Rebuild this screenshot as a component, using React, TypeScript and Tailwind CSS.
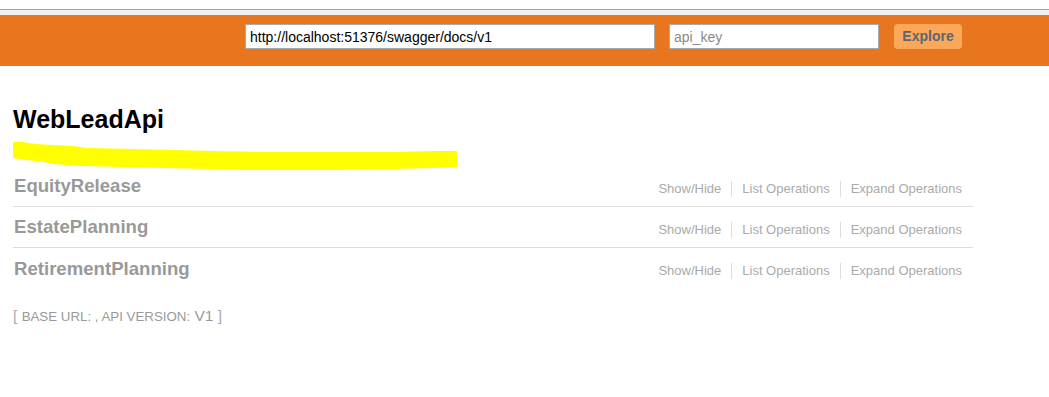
import React from 'react';

const resources = ['EquityRelease', 'EstatePlanning', 'RetirementPlanning'];

const ops = ['Show/Hide', 'List Operations', 'Expand Operations'];

export default function App() {
  return (
    <div className="min-h-[397px] w-[1049px] bg-white font-['Liberation_Sans',Arial,sans-serif]">
      {/* browser chrome strip */}
      <div className="h-[9px] bg-white" />
      <div className="h-[6px] border-t border-[#a3a3a3] bg-[#f0f0f0]" />

      {/* header */}
      <div className="flex h-[51px] items-start bg-[#e8761f] pt-[9px]">
        <div className="ml-[245px] flex items-center">
          <input
            className="h-[25px] w-[410px] border border-[#a9a9a9] bg-white px-[4px] text-[14px] text-black outline-none"
            defaultValue="http://localhost:51376/swagger/docs/v1"
          />
          <input
            className="ml-[14px] h-[25px] w-[210px] border border-[#a9a9a9] bg-white px-[4px] text-[14px] text-black outline-none placeholder:text-[#8a8a8a]"
            placeholder="api_key"
          />
          <button className="ml-[15px] h-[25px] w-[68px] rounded-[4px] bg-[#fba85b] text-[14px] font-bold text-[#5c6670]">
            Explore
          </button>
        </div>
      </div>

      <div className="ml-[13px] w-[960px]">
        <h1 className="mt-[39px] text-[25px] font-bold leading-[28px] text-black">WebLeadApi</h1>

        {/* highlighter mark */}
        <svg width="450" height="30" viewBox="0 0 450 30" className="mt-[9px] block">
          <polygon
            points="0,0 10,0 22,2 40,3 60,4 75,6 120,7 200,9 260,10 300,10 380,10 420,9 444,9 444,25 420,26 380,27 320,28 270,28 230,28 200,27 150,26 110,25 70,24 40,22 30,20 14,18 0,16"
            fill="#ffff00"
          />
        </svg>

        <div className="-mt-[6px]">
          {resources.map((name, i) => (
            <div
              key={name}
              className={`flex h-[41px] items-center justify-between ${
                i < resources.length - 1 ? 'border-b border-[#dddddd]' : ''
              }`}
            >
              <h2 className="pl-[1px] text-[18.6px] font-bold text-[#999999]">{name}</h2>
              <ul className="mt-[5px] flex pr-[11px] text-[13px] text-[#aaaaaa]">
                {ops.map((op, j) => (
                  <li
                    key={op}
                    className={`px-[10px] leading-[16px] ${
                      j < ops.length - 1 ? 'border-r border-[#dddddd]' : 'pr-0'
                    }`}
                  >
                    {op}
                  </li>
                ))}
              </ul>
            </div>
          ))}
        </div>

        <div className="mt-[17px] text-[15.5px] leading-[20px] text-[#999999]">
          <span className="text-[#aaaaaa]">[</span>{' '}
          <span className="text-[13.3px]">BASE URL: , API VERSION:</span> V1{' '}
          <span className="text-[#aaaaaa]">]</span>
        </div>
      </div>
    </div>
  );
}
